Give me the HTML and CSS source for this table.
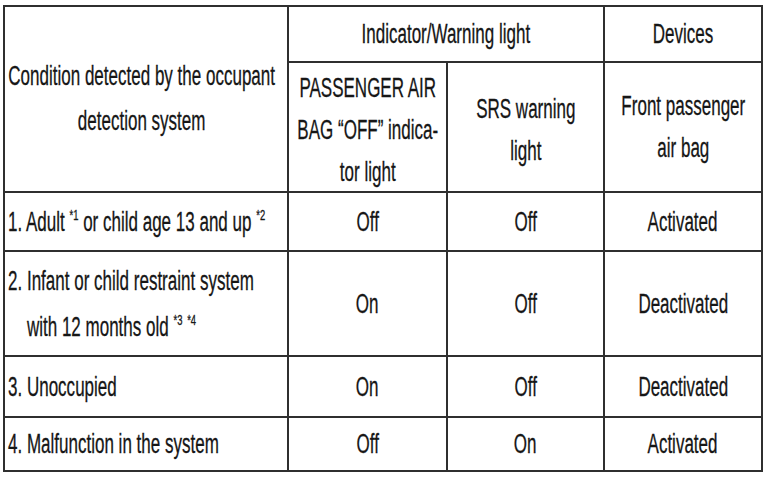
FILE: index.html
```html
<!DOCTYPE html>
<html lang="en">
<head>
<meta charset="utf-8">
<title>Occupant detection system</title>
<link rel="stylesheet" href="styles.css">
</head>
<body>
<div class="sheet">
  <div class="cell cond"><span class="t">Condition detected by the occupant<br>detection system</span></div>
  <div class="cell ind"><span class="t">Indicator/Warning light</span></div>
  <div class="cell"><span class="t">Devices</span></div>
  <div class="cell low"><span class="t">PASSENGER AIR<br>BAG “OFF” indica-<br>tor light</span></div>
  <div class="cell low"><span class="t">SRS warning<br>light</span></div>
  <div class="cell"><span class="t">Front passenger<br>air bag</span></div>

  <div class="cell left"><span class="t">1. Adult <span class="sup">*1</span> or child age 13 and up <span class="sup">*2</span></span></div>
  <div class="cell"><span class="t">Off</span></div>
  <div class="cell"><span class="t">Off</span></div>
  <div class="cell"><span class="t">Activated</span></div>

  <div class="cell left two"><span class="t hang">2. Infant or child restraint system<br>with 12 months old <span class="sup">*3</span> <span class="sup">*4</span></span></div>
  <div class="cell"><span class="t">On</span></div>
  <div class="cell"><span class="t">Off</span></div>
  <div class="cell"><span class="t">Deactivated</span></div>

  <div class="cell left"><span class="t">3. Unoccupied</span></div>
  <div class="cell"><span class="t">On</span></div>
  <div class="cell"><span class="t">Off</span></div>
  <div class="cell"><span class="t">Deactivated</span></div>

  <div class="cell left"><span class="t">4. Malfunction in the system</span></div>
  <div class="cell"><span class="t">Off</span></div>
  <div class="cell"><span class="t">On</span></div>
  <div class="cell"><span class="t">Activated</span></div>
</div>
</body>
</html>
```
FILE: styles.css
```css
body {
  margin: 5px 0 0 3px;
  background: #ffffff;
  font-family: "Liberation Sans", Arial, sans-serif;
  color: #161616;
}

.sheet {
  display: grid;
  grid-template-columns: 282px 157px 155px 156px;
  grid-template-rows: 54px 128px 57px 103px 59px 52px;
  gap: 2px;
  padding: 2px;
  background: #2f2f2f;
  width: max-content;
}

.cell {
  background: #ffffff;
  display: flex;
  align-items: center;
  justify-content: center;
  font-size: 27px;
  line-height: 42px;
}

.t {
  display: inline-block;
  flex: none;
  white-space: nowrap;
  text-align: center;
  transform: scaleX(0.63);
  -webkit-text-stroke: 0.3px currentColor;
}

.cond {
  grid-row: span 2;
  line-height: 45px;
  padding-right: 8px;
}

.ind {
  grid-column: span 2;
}

.low {
  padding-top: 6px;
}

.left {
  justify-content: flex-start;
  padding-left: 3px;
}

.left .t {
  text-align: left;
  transform-origin: left center;
}

.two {
  line-height: 46px;
}

.hang {
  padding-left: 1.112em;
  text-indent: -1.112em;
}

.sup {
  font-size: 15px;
  line-height: 0;
  vertical-align: 11px;
}
```
